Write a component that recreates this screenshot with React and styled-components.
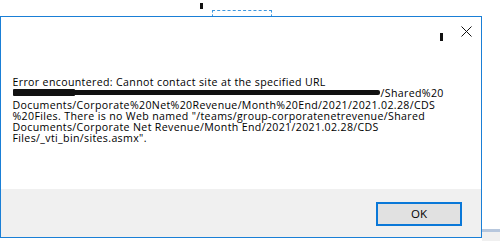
import { styled, createGlobalStyle } from 'styled-components';

const GlobalStyle = createGlobalStyle`
  html, body {
    margin: 0;
    padding: 0;
    background: #ffffff;
    font-family: "Open Sans", "Noto Sans", sans-serif;
  }
`;

function CloseIcon() {
  return (
    <svg width="11" height="11" viewBox="0 0 11 11">
      <path d="M0.5 0.5 L10.5 10.5 M10.5 0.5 L0.5 10.5" stroke="#111" strokeWidth="1" />
    </svg>
  );
}

function App() {
  return (
    <Page>
      <GlobalStyle />
      <TopStrip>
        <Caret $left={200} $top={3} $height={6} />
        <FocusTab />
      </TopStrip>
      <MainRow>
        <Dialog>
          <Header>
            <Caret $left={0} $top={16} $height={8} />
            <CloseButton>
              <CloseIcon />
            </CloseButton>
          </Header>
          <Message>
            <Line>Error encountered: Cannot contact site at the specified URL</Line>
            <Line>
              <Redaction>
                <RedactionThick />
              </Redaction>
              /Shared%20
            </Line>
            <Line>Documents/Corporate%20Net%20Revenue/Month%20End/2021/2021.02.28/CDS</Line>
            <Line>%20Files. There is no Web named "/teams/group-corporatenetrevenue/Shared</Line>
            <Line>Documents/Corporate Net Revenue/Month End/2021/2021.02.28/CDS</Line>
            <Line>Files/_vti_bin/sites.asmx".</Line>
          </Message>
          <Footer>
            <OkButton>OK</OkButton>
          </Footer>
        </Dialog>
        <Backdrop>
          <BackdropStrip />
        </Backdrop>
      </MainRow>
    </Page>
  );
}

export default App;

const Page = styled.div`
  width: 500px;
  height: 241px;
  overflow: hidden;
  background: #ffffff;
`;

const TopStrip = styled.div`
  height: 16px;
  display: flex;
  align-items: flex-start;
`;

const Caret = styled.span`
  display: block;
  width: 3px;
  height: ${(p) => p.$height}px;
  margin-left: ${(p) => p.$left}px;
  margin-top: ${(p) => p.$top}px;
  background: #111;
  flex-shrink: 0;
`;

const FocusTab = styled.span`
  display: block;
  margin-left: 9px;
  margin-top: 10px;
  width: 58px;
  height: 6px;
  border: 1px dashed #3b97e0;
  border-bottom: none;
`;

const MainRow = styled.div`
  display: flex;
  height: 225px;
`;

const Dialog = styled.div`
  width: 482px;
  height: 222px;
  box-sizing: border-box;
  border: 1px solid #1a7fd6;
  background: #ffffff;
  display: flex;
  flex-direction: column;
`;

const Header = styled.div`
  height: 40px;
  display: flex;
  justify-content: flex-end;
  align-items: flex-start;
  gap: 18px;
  padding-right: 9px;
`;

const CloseButton = styled.div`
  margin-top: 9px;
  width: 11px;
  height: 11px;
  line-height: 0;
`;

const Message = styled.div`
  margin-top: 20px;
  padding-left: 11.5px;
  font-size: 10.6px;
  letter-spacing: 0.35px;
  line-height: 11.3px;
  color: #000;
`;

const Line = styled.div`
  white-space: nowrap;
`;

const Redaction = styled.span`
  display: inline-flex;
  align-items: center;
  width: 367px;
  height: 5px;
  background: #111;
  border-radius: 2px;
  vertical-align: 1px;
  margin-right: 1px;
`;

const RedactionThick = styled.span`
  display: block;
  width: 62px;
  height: 7px;
  background: #111;
  border-radius: 1px;
`;

const Footer = styled.div`
  margin-top: auto;
  height: 48px;
  background: #f0f0f0;
  display: flex;
  justify-content: flex-end;
  align-items: flex-start;
  padding-right: 19px;
`;

const OkButton = styled.button`
  margin-top: 13px;
  width: 86px;
  height: 24px;
  box-sizing: border-box;
  border: 2px solid #0a78d8;
  background: #e1e1e1;
  font-family: "Open Sans", "Noto Sans", sans-serif;
  font-size: 11.5px;
  color: #000;
  padding: 0;
  padding-bottom: 1px;
`;

const Backdrop = styled.div`
  flex: 1;
  display: flex;
  flex-direction: column;
  justify-content: flex-end;
  background: #ffffff;
`;

const BackdropStrip = styled.div`
  height: 12px;
  border-top: 3px solid #b7c7dd;
  box-sizing: border-box;
  background: #f0f0f0;
`;
